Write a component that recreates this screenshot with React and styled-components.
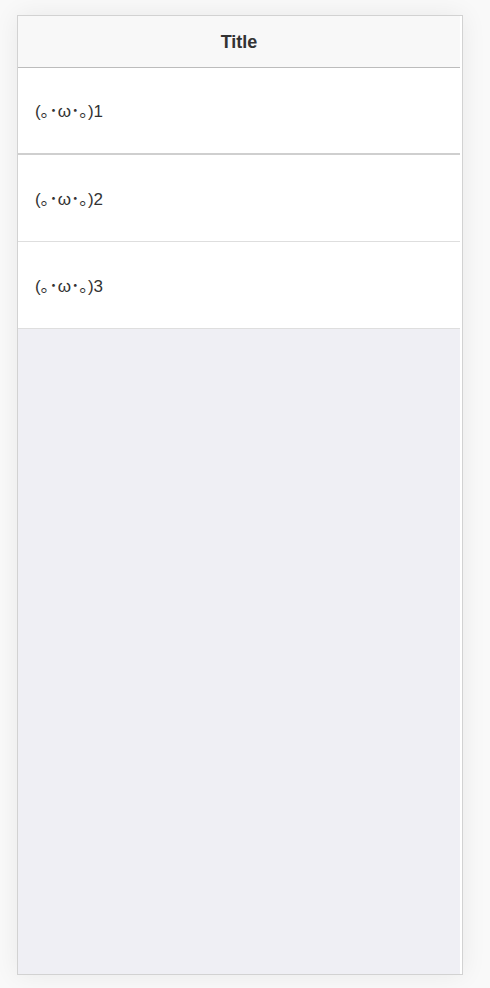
import React from 'react';
import styled, { createGlobalStyle } from 'styled-components'

const GlobalStyle = createGlobalStyle`
  html, body {
    margin: 0;
    padding: 0;
    background: #f9f9f9;
    font-family: "Liberation Sans", "Noto Sans CJK JP", sans-serif;
  }
`

const Page = styled.div`
  padding: 15px 0 0 17px;
  height: 988px;
  box-sizing: border-box;
`

const Phone = styled.div`
  display: flex;
  box-sizing: border-box;
  width: 446px;
  height: 960px;
  border: 1px solid #d2d2d2;
  background: #fff;
  box-shadow: 0 0 24px rgba(0, 0, 0, 0.07);
`

const Screen = styled.div`
  display: flex;
  flex-direction: column;
  flex-grow: 1;
  background: #efeff4;
`

const Gutter = styled.div`
  width: 2px;
  background: #fff;
`

const NavBar = styled.div`
  display: flex;
  align-items: center;
  justify-content: center;
  box-sizing: border-box;
  height: 52px;
  padding-top: 2px;
  background: #f8f8f8;
  border-bottom: 1px solid #bcbcbc;
  font-size: 18px;
  font-weight: bold;
  color: #333;
`

const Row = styled.div`
  display: flex;
  align-items: center;
  box-sizing: border-box;
  height: ${props => props.first ? '87px' : '87px'};
  padding: 0 0 2px 17px;
  background: #fff;
  border-bottom: ${props => props.first ? '2px solid #cfcfcf' : '1px solid #dedede'};
  font-size: 17px;
  color: #333;
`

const items = [1, 2, 3]

class App extends React.Component {
  render() {
    return (
      <Page>
        <GlobalStyle />
        <Phone>
          <Screen>
            <NavBar>Title</NavBar>
            {items.map((n, index) => {
              return <Row key={n} first={index === 0}>(｡･ω･｡){n}</Row>
            })}
          </Screen>
          <Gutter />
        </Phone>
      </Page>
    );
  }
}

export default App;
